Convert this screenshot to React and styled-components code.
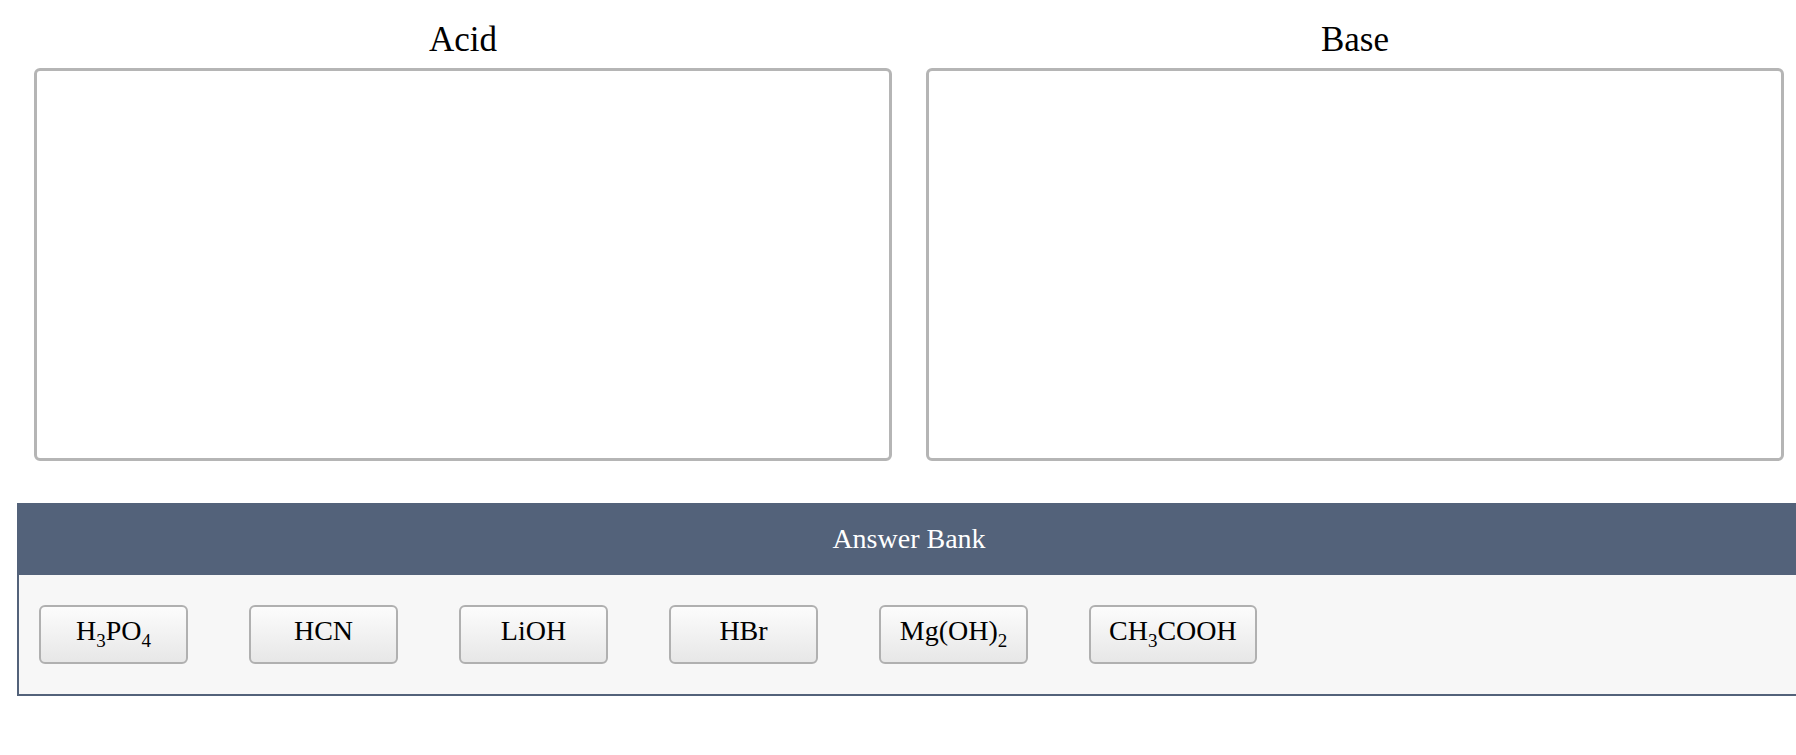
import React from "react";
import styled, { createGlobalStyle } from "styled-components";

const GlobalStyle = createGlobalStyle`
  html, body {
    margin: 0;
    padding: 0;
    background: #ffffff;
    overflow-x: hidden;
  }
  body {
    font-family: "Liberation Serif", "Times New Roman", serif;
    color: #000000;
  }
`;

const zones = ["Acid", "Base"];

// odd entries are subscripts
const answers = [
  ["H", "3", "PO", "4"],
  ["HCN"],
  ["LiOH"],
  ["HBr"],
  ["Mg(OH)", "2"],
  ["CH", "3", "COOH"],
];

const Formula = ({ parts }) => (
  <Label>
    {parts.map((part, i) =>
      i % 2 === 1 ? <Sub key={i}>{part}</Sub> : <span key={i}>{part}</span>
    )}
  </Label>
);

const App = () => {
  return (
    <Page>
      <GlobalStyle />
      <Zones>
        {zones.map((name) => (
          <Zone key={name}>
            <ZoneTitle>{name}</ZoneTitle>
            <DropBox />
          </Zone>
        ))}
      </Zones>
      <Bank>
        <BankHeader>Answer Bank</BankHeader>
        <BankBody>
          {answers.map((parts, i) => (
            <Chip key={i}>
              <Formula parts={parts} />
            </Chip>
          ))}
        </BankBody>
      </Bank>
    </Page>
  );
};

export default App;

const Page = styled.div`
  width: 1784px;
  margin-left: 17px;
  padding-top: 20px;
`;

const Zones = styled.div`
  display: grid;
  grid-template-columns: 1fr 1fr;
  column-gap: 34px;
  padding: 0 17px;
`;

const Zone = styled.div`
  display: flex;
  flex-direction: column;
`;

const ZoneTitle = styled.div`
  font-size: 35px;
  line-height: 40px;
  text-align: center;
  margin-bottom: 8px;
`;

const DropBox = styled.div`
  height: 393px;
  box-sizing: border-box;
  border: 3px solid #b5b5b5;
  border-radius: 6px;
  background: #ffffff;
`;

const Bank = styled.div`
  margin-top: 42px;
  border: 2px solid #53627a;
  border-top: none;
`;

const BankHeader = styled.div`
  height: 72px;
  margin: 0 -2px;
  background: #53627a;
  color: #ffffff;
  font-size: 28px;
  display: flex;
  align-items: center;
  justify-content: center;
`;

const BankBody = styled.div`
  background: #f7f7f7;
  display: flex;
  gap: 61px;
  padding: 30px 20px;
`;

const Chip = styled.div`
  box-sizing: border-box;
  height: 59px;
  min-width: 149px;
  padding: 0 18px 7px;
  border: 2px solid #b0b0b0;
  border-radius: 6px;
  background: linear-gradient(#fcfcfc, #e7e7e7);
  font-size: 28px;
  line-height: 32px;
  display: flex;
  align-items: center;
  justify-content: center;
  white-space: nowrap;
`;

const Label = styled.span`
  display: block;
`;

const Sub = styled.span`
  font-size: 19px;
  line-height: 0;
  vertical-align: -7px;
`;
